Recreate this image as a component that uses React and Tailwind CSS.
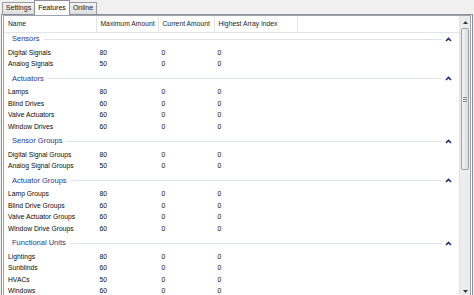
import React from 'react';

const groups = [
  { name: 'Sensors', items: [['Digital Signals', 80], ['Analog Signals', 50]] },
  {
    name: 'Actuators',
    items: [['Lamps', 80], ['Blind Drives', 60], ['Valve Actuators', 60], ['Window Drives', 60]],
  },
  { name: 'Sensor Groups', items: [['Digital Signal Groups', 80], ['Analog Signal Groups', 50]] },
  {
    name: 'Actuator Groups',
    items: [
      ['Lamp Groups', 80],
      ['Blind Drive Groups', 60],
      ['Valve Actuator Groups', 60],
      ['Window Drive Groups', 60],
    ],
  },
  {
    name: 'Functional Units',
    items: [['Lightings', 80], ['Sunblinds', 60], ['HVACs', 50], ['Windows', 60]],
  },
];

const cols = 'grid grid-cols-[92px_62px_56px_84px]';

function Tab({ label, active, w }) {
  if (active) {
    return (
      <div
        className={`${w} h-[15px] -mx-[1px] -mb-[1px] z-10 relative flex items-center justify-center border border-b-0 border-[#8e9097] bg-[#fcfcfc] text-[7px] text-[#111]`}
      >
        {label}
      </div>
    );
  }
  return (
    <div
      className={`${w} h-[12px] flex items-center justify-center border border-b-0 border-[#9a9ca2] bg-linear-to-b from-[#f4f4f4] to-[#dedede] text-[7px] text-[#222]`}
    >
      {label}
    </div>
  );
}

function Chevron() {
  return (
    <svg width="7" height="5" viewBox="0 0 7 5">
      <polyline points="1,4 3.5,1.5 6,4" fill="none" stroke="#1d2f6b" strokeWidth="1.6" />
    </svg>
  );
}

function Arrow({ up }) {
  return (
    <svg width="5" height="3" viewBox="0 0 5 3">
      <polygon points={up ? '0,3 2.5,0 5,3' : '0,0 2.5,3 5,0'} fill="#3a3a3a" />
    </svg>
  );
}

export default function App() {
  return (
    <div
      className="w-[474px] h-[295px] bg-[#f0f0f0] overflow-hidden flex flex-col"
      style={{ fontFamily: '"Liberation Sans", Arial, sans-serif' }}
    >
      <div className="h-[14px] flex items-end pl-[2px]">
        <Tab label="Settings" w="w-[33px]" />
        <Tab label="Features" w="w-[36px]" active />
        <Tab label="Online" w="w-[28px]" />
      </div>

      <div className="flex-1 ml-[1px] mr-[1px] mb-[1px] border border-[#8e9097] bg-white p-[1px] pt-0 flex">
        <div className="flex-1 border border-[#9da3ad] flex overflow-hidden">
          <div className="flex-1 flex flex-col overflow-hidden">
            <div className={`${cols} h-[17px] border-b border-[#e3e5e9] text-[6.75px] text-[#1a1a1a] shrink-0`}>
              <div className="flex items-center pl-[4px] pt-[1px]">Name</div>
              <div className="flex items-center pl-[3.5px] pt-[1px] border-l border-[#e3e5e9]">Maximum Amount</div>
              <div className="flex items-center pl-[3.5px] pt-[1px] border-l border-[#e3e5e9]">Current Amount</div>
              <div className="flex items-center pl-[3.5px] pt-[1px] border-l border-r border-[#e3e5e9]">
                Highest Array Index
              </div>
            </div>

            <div className="flex-1 overflow-hidden">
              {groups.map((g, gi) => (
                <div key={g.name} className={gi === 0 ? '' : 'mt-[2.5px]'}>
                  <div className="h-[12px] mb-[2px] flex items-center pl-[8px] pr-[7px]">
                    <span className="text-[7.5px] text-[#1e3a8f] whitespace-nowrap">{g.name}</span>
                    <div className="flex-1 h-px bg-[#dfe3ea] ml-[4px] mr-[3px]" />
                    <Chevron />
                  </div>
                  {g.items.map(([name, max]) => (
                    <div key={name} className={`${cols} h-[11.5px] text-[6.75px] text-[#0a0a0a]`}>
                      <div className="flex items-center pl-[4px] whitespace-nowrap">{name}</div>
                      <div className="flex items-center pl-[3.5px]">{max}</div>
                      <div className="flex items-center pl-[3.5px]">0</div>
                      <div className="flex items-center pl-[3.5px]">0</div>
                    </div>
                  ))}
                </div>
              ))}
            </div>
          </div>

          <div className="w-[11px] flex flex-col bg-[#ececec] border-l border-[#e2e2e2]">
            <div className="h-[12px] flex items-center justify-center">
              <Arrow up />
            </div>
            <div className="h-[142px] mx-[1px] rounded-[2px] border border-[#a2a2a2] bg-linear-to-r from-[#f4f4f4] to-[#dcdcdc] flex flex-col items-center justify-center gap-[1px]">
              <div className="w-[4px] h-px bg-[#8a8a8a]" />
              <div className="w-[4px] h-px bg-[#8a8a8a]" />
              <div className="w-[4px] h-px bg-[#8a8a8a]" />
            </div>
            <div className="flex-1" />
            <div className="h-[12px] flex items-center justify-center">
              <Arrow />
            </div>
          </div>
        </div>
      </div>
    </div>
  );
}
